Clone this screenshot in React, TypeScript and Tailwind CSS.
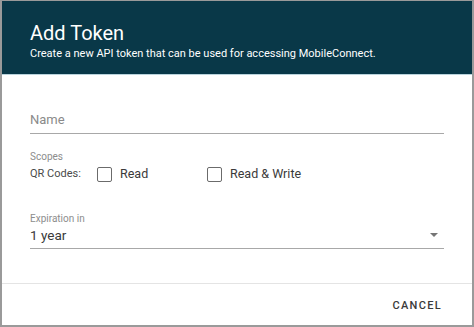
import React, { useState } from 'react';

const Checkbox: React.FC<{ label: string; checked: boolean; onChange: () => void }> = ({ label, checked, onChange }) => (
  <label className="flex items-center cursor-pointer" onClick={onChange}>
    <span className={`w-[15px] h-[15px] rounded-[2px] border-[1.5px] border-[#6b6b6b] ${checked ? 'bg-[#093848]' : 'bg-white'}`} />
    <span className="ml-[8px] text-[12.5px] text-[#3a3a3a]">{label}</span>
  </label>
);

const App: React.FC = () => {
  const [read, setRead] = useState(false);
  const [readWrite, setReadWrite] = useState(false);

  return (
    <div
      className="w-[474px] h-[327px] bg-white border-l-[2px] border-r-[2px] border-b-[2px] border-t border-[#9a9a9a] flex flex-col overflow-hidden"
      style={{ fontFamily: 'Roboto, "Liberation Sans", sans-serif' }}
    >
      {/* header */}
      <div className="h-[74px] bg-[#093848] px-[28px] pt-[20px] border-b border-[#b9d3dc] shrink-0">
        <h1 className="text-[20px] leading-[24px] text-white">Add Token</h1>
        <p className="text-[11px] leading-[16px] text-white mt-[1px]">
          Create a new API token that can be used for accessing MobileConnect.
        </p>
      </div>

      {/* body */}
      <div className="flex-1 px-[28px] pt-[32px]">
        <div className="border-b-[1.5px] border-[#a8a8a8] pb-[2px]">
          <span className="text-[13px] text-[#8a8a8a]">Name</span>
        </div>

        <div className="mt-[16px] text-[10px] leading-[14px] text-[#8d8d8d]">Scopes</div>
        <div className="flex items-center mt-[1px] h-[18px]">
          <span className="text-[11px] text-[#4a4a4a] w-[67px]">QR Codes:</span>
          <div className="w-[110px]">
            <Checkbox label="Read" checked={read} onChange={() => setRead(!read)} />
          </div>
          <Checkbox label="Read & Write" checked={readWrite} onChange={() => setReadWrite(!readWrite)} />
        </div>

        <div className="mt-[29px] text-[10px] leading-[14px] text-[#8d8d8d]">Expiration in</div>
        <div className="flex items-center justify-between border-b-[1.5px] border-[#a8a8a8] pb-[4px] h-[23px]">
          <span className="text-[13.5px] text-[#3a3a3a]">1 year</span>
          <svg width="8" height="4" viewBox="0 0 8 4" className="mr-[6px]">
            <path d="M0 0 L8 0 L4 4 Z" fill="#757575" />
          </svg>
        </div>
      </div>

      {/* footer */}
      <div className="h-[42px] border-t border-[#e4e4e4] flex items-center justify-end pr-[30px] pt-[3px] shrink-0">
        <button className="text-[11px] font-medium tracking-[0.12em] text-[#3a3a3a]">CANCEL</button>
      </div>
    </div>
  );
};

export default App;
